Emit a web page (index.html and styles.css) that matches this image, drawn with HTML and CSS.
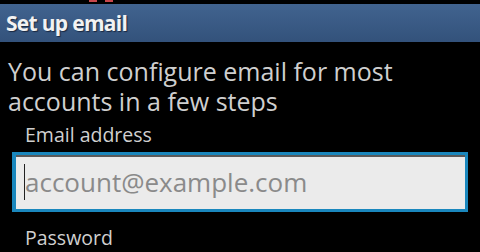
FILE: index.html
```html
<!DOCTYPE html>
<html>
<head>
<meta charset="utf-8">
<link rel="stylesheet" href="styles.css">
</head>
<body>
<div class="status">
  <span class="mark mark1"></span>
  <span class="mark mark2"></span>
</div>
<div class="titlebar"><span class="title">Set up email</span></div>
<div class="content">
  <p class="intro">You can configure email for most accounts in a few steps</p>
  <div class="label">Email address</div>
  <div class="field">
    <span class="cursor"></span>
    <span class="placeholder">account@example.com</span>
  </div>
  <div class="label label2">Password</div>
</div>
</body>
</html>
```
FILE: styles.css
```css
html, body {
  margin: 0;
  padding: 0;
  background: #000;
  width: 480px;
  height: 252px;
  overflow: hidden;
  font-family: "Open Sans", "DejaVu Sans", sans-serif;
}
.status {
  height: 4px;
  display: flex;
  align-items: flex-start;
}
.mark {
  height: 2px;
  background: #c8474c;
}
.mark1 { width: 8px; margin-left: 89px; }
.mark2 { width: 8px; margin-left: 8px; }
.titlebar {
  height: 38px;
  background: linear-gradient(#41638f, #33527b);
  display: flex;
  align-items: center;
  padding-left: 6px;
}
.title {
  color: #f2f2f2;
  font-weight: bold;
  font-size: 21px;
  text-shadow: 1px 1px 1px #1a2840;
  letter-spacing: -0.7px;
}
.content {
  padding: 14px 0 0 0;
}
.intro {
  margin: 0 0 0 8px;
  color: #cfcfcf;
  font-size: 25px;
  line-height: 30px;
  width: 440px;
}
.label {
  color: #d0d0d0;
  font-size: 19.5px;
  line-height: 26px;
  margin: 6px 0 0 25px;
}
.field {
  margin: 4px 12px 0 12px;
  height: 54px;
  border: 3px solid #1a87bd;
  border-width: 3px 3px 3px 4px;
  background: #ebebeb;
  box-shadow: inset 0 2px 0 #5a5a5a;
  display: flex;
  align-items: center;
  padding-left: 8px;
}
.cursor {
  width: 1px;
  height: 36px;
  background: #222;
}
.placeholder {
  color: #8a8a8a;
  font-size: 26px;
}
.label2 {
  margin-top: 13px;
}
```
